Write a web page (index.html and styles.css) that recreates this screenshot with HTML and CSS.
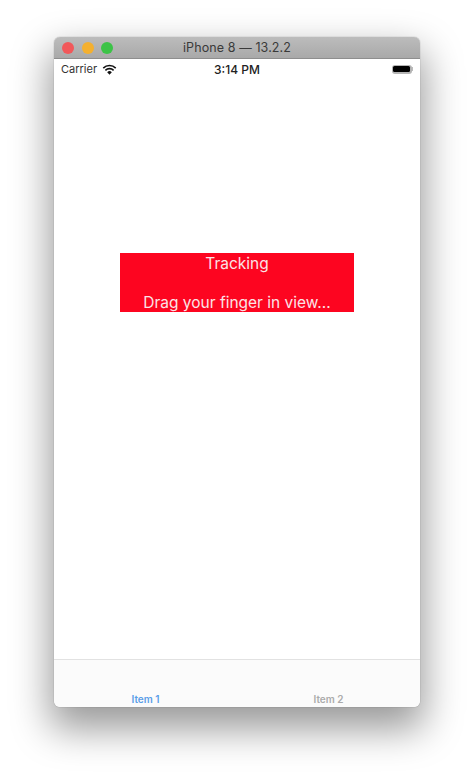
FILE: index.html
```html
<!DOCTYPE html>
<html lang="en">
<head>
<meta charset="utf-8">
<title>iPhone 8 — 13.2.2</title>
<link rel="stylesheet" href="styles.css">
</head>
<body>
<div class="window">
  <header class="titlebar">
    <div class="lights">
      <span class="light red"></span>
      <span class="light yellow"></span>
      <span class="light green"></span>
    </div>
    <div class="title">iPhone 8 — 13.2.2</div>
  </header>
  <div class="status">
    <div class="status-left">
      <span>Carrier</span>
      <svg class="wifi" viewBox="0 0 16 12" width="15" height="11" aria-hidden="true">
        <path d="M8 11.6 5.5 8.9a3.5 3.5 0 0 1 5 0Z" fill="#111"/>
        <path d="M3.5 6.9a6.4 6.4 0 0 1 9 0" fill="none" stroke="#111" stroke-width="1.7"/>
        <path d="M1.2 4.5a9.7 9.7 0 0 1 13.6 0" fill="none" stroke="#111" stroke-width="1.7"/>
      </svg>
    </div>
    <div class="status-time">3:14 PM</div>
    <div class="status-right">
      <div class="battery"><span class="battery-fill"></span></div>
      <span class="battery-cap"></span>
    </div>
  </div>
  <main class="content">
    <div class="card">
      <div>Tracking</div>
      <div>Drag your finger in view...</div>
    </div>
  </main>
  <nav class="tabbar">
    <div class="tab active">Item 1</div>
    <div class="tab">Item 2</div>
  </nav>
</div>
</body>
</html>
```
FILE: styles.css
```css
html, body {
  margin: 0;
  background: #fff;
}
body {
  padding: 37px 54px 0;
  box-sizing: border-box;
  height: 779px;
  overflow: hidden;
  font-family: Inter, "Liberation Sans", sans-serif;
}
.window {
  width: 366px;
  height: 670px;
  display: flex;
  flex-direction: column;
  border-radius: 6px;
  overflow: hidden;
  background: #fff;
  box-shadow: 0 18px 38px 4px rgba(0, 0, 0, 0.4), 0 0 1px rgba(0, 0, 0, 0.5);
}
.titlebar {
  height: 21px;
  flex: none;
  display: flex;
  align-items: center;
  justify-content: center;
  position: relative;
  background: linear-gradient(#bcbcbc, #a9a9a9);
  border-bottom: 1px solid #8e8e8e;
}
.lights {
  position: absolute;
  left: 8px;
  top: 4.5px;
  display: flex;
  gap: 7.5px;
}
.light {
  width: 12px;
  height: 12px;
  border-radius: 50%;
}
.red { background: #f1585a; }
.yellow { background: #f4b02f; }
.green { background: #3cc347; }
.title {
  font-size: 12.5px;
  color: #3a3a3a;
  letter-spacing: 0.1px;
}
.status {
  height: 20px;
  flex: none;
  display: grid;
  grid-template-columns: 1fr auto 1fr;
  align-items: center;
  padding: 0 7px;
  font-size: 11px;
  color: #333;
}
.status-left {
  display: flex;
  align-items: center;
  gap: 5px;
}
.wifi { display: block; }
.status-time {
  font-size: 12px;
  font-weight: 500;
  color: #222;
}
.status-right {
  display: flex;
  align-items: center;
  justify-content: flex-end;
}
.battery {
  width: 20px;
  height: 9px;
  box-sizing: border-box;
  padding: 1.5px;
  border-radius: 3px;
  background: #b5b5b5;
}
.battery-fill {
  display: block;
  height: 100%;
  border-radius: 1.5px;
  background: #000;
}
.battery-cap {
  width: 1.5px;
  height: 4px;
  background: #bbb;
}
.content {
  flex: 1;
  padding: 174px 66px 0;
}
.card {
  width: 234px;
  height: 59px;
  box-sizing: border-box;
  padding-top: 2px;
  background: #fd0520;
  color: #fbe3e6;
  font-size: 15.5px;
  line-height: 18px;
  text-align: center;
  display: flex;
  flex-direction: column;
  gap: 21px;
}
.tabbar {
  height: 48px;
  box-sizing: border-box;
  flex: none;
  display: grid;
  grid-template-columns: 1fr 1fr;
  align-items: end;
  background: #fbfbfb;
  border-top: 1px solid #e2e2e2;
  font-size: 10px;
  font-weight: 600;
  color: #ababab;
  text-align: center;
  padding-bottom: 1px;
}
.tab { line-height: 14px; }
.active { color: #5a9ee8; }
```
